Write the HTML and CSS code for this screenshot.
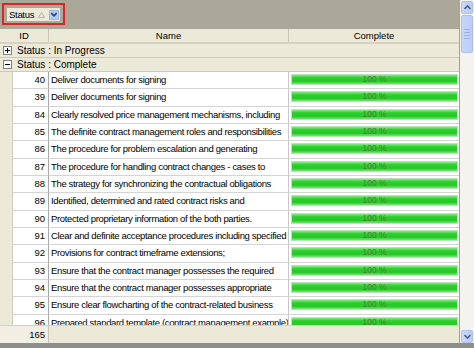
FILE: index.html
```html
<!DOCTYPE html>
<html lang="en">
<head>
  <meta charset="UTF-8" />
  <meta name="viewport" content="width=device-width, initial-scale=1.0" />
  <title>Contract Tasks</title>
  <link rel="stylesheet" href="styles.css">
</head>
<body>
  <div class="window">
    <div class="grid">
      <div class="group-panel">
        <div class="group-box">
          <div class="group-chip">
            <span class="chip-text">Status</span>
            <svg class="sort-icon" width="7" height="6" viewBox="0 0 7 6"><path d="M3.5 0.5 L6.5 5.5 L0.5 5.5 Z" fill="none" stroke="#b9b5a4" stroke-width="1"/></svg>
            <span class="chip-drop">
              <svg width="9" height="9" viewBox="0 0 9 9"><path d="M1.5 3 L4.5 6 L7.5 3" fill="none" stroke="#1c3f94" stroke-width="1.8"/></svg>
            </span>
          </div>
        </div>
      </div>

      <div class="header">
        <div class="cell-id">ID</div>
        <div class="cell-name">Name</div>
        <div class="cell-done">Complete</div>
      </div>

      <div class="group-row">
        <svg class="toggle" width="9" height="9" viewBox="0 0 9 9"><rect x="0.5" y="0.5" width="8" height="8" fill="#fff" stroke="#808080"/><path d="M2 4.5 H7 M4.5 2 V7" stroke="#000"/></svg>
        Status : In Progress
      </div>
      <div class="group-row">
        <svg class="toggle" width="9" height="9" viewBox="0 0 9 9"><rect x="0.5" y="0.5" width="8" height="8" fill="#fff" stroke="#808080"/><path d="M2 4.5 H7" stroke="#000"/></svg>
        Status : Complete
      </div>

      <div class="rows" id="rows"></div>

      <div class="footer">
        <div class="foot-id">165</div>
        <div class="foot-rest"></div>
      </div>
    </div>

    <div class="scrollbar">
      <div class="sb-btn">
        <svg width="9" height="9" viewBox="0 0 9 9"><path d="M1.5 6 L4.5 3 L7.5 6" fill="none" stroke="#4d6185" stroke-width="1.6"/></svg>
      </div>
      <div class="sb-track">
        <div class="sb-thumb"><span></span><span></span><span></span><span></span></div>
      </div>
      <div class="sb-btn">
        <svg width="9" height="9" viewBox="0 0 9 9"><path d="M1.5 3 L4.5 6 L7.5 3" fill="none" stroke="#4d6185" stroke-width="1.6"/></svg>
      </div>
    </div>
  </div>
  <div class="status-strip"></div>

  <script>
    const tasks = [
      [40, 'Deliver documents for signing'],
      [39, 'Deliver documents for signing'],
      [84, 'Clearly resolved price management mechanisms, including'],
      [85, 'The definite contract management roles and responsibilities'],
      [86, 'The procedure for problem escalation and generating'],
      [87, 'The procedure for handling contract changes - cases to'],
      [88, 'The strategy for synchronizing the contractual obligations'],
      [89, 'Identified, determined and rated contract risks and'],
      [90, 'Protected proprietary information of the both parties.'],
      [91, 'Clear and definite acceptance procedures including specified'],
      [92, 'Provisions for contract timeframe extensions;'],
      [93, 'Ensure that the contract manager possesses the required'],
      [94, 'Ensure that the contract manager possesses appropriate'],
      [95, 'Ensure clear flowcharting of the contract-related business'],
      [96, 'Prepared standard template (contract management example)']
    ];

    const rows = document.getElementById('rows');
    tasks.forEach(([id, name]) => {
      const row = document.createElement('div');
      row.className = 'row';
      row.innerHTML =
        '<div class="indent"></div>' +
        '<div class="cell-id">' + id + '</div>' +
        '<div class="cell-name">' + name + '</div>' +
        '<div class="cell-done"><div class="bar">100 %</div></div>';
      rows.appendChild(row);
    });
  </script>
</body>
</html>
```

FILE: styles.css
```css
* { box-sizing: border-box; }
body {
  margin: 0;
  width: 474px;
  height: 348px;
  overflow: hidden;
  font-family: "Liberation Sans", Arial, sans-serif;
  font-size: 9.5px;
  color: #000;
  background: #ece9d8;
}
.window {
  display: flex;
  height: 343px;
}
.grid {
  width: 460px;
  display: flex;
  flex-direction: column;
  border-right: 1px solid #a5a292;
}

/* group by panel */
.group-panel {
  height: 29px;
  background: #aca899;
  padding: 3px 0 0 2px;
}
.group-box {
  display: inline-flex;
  border: 2px solid #d8262a;
  padding: 3px 3px 2px 3px;
  height: 22px;
  width: 63px;
}
.group-chip {
  display: flex;
  align-items: center;
  gap: 4px;
  background: #ece9d8;
  padding: 0 1px 0 2px;
  width: 53px;
  font-size: 9.5px;
  letter-spacing: -0.3px;
}
.sort-icon { flex-shrink: 0; }
.chip-drop {
  display: flex;
  align-items: center;
  justify-content: center;
  flex-shrink: 0;
  width: 10px;
  height: 10px;
  background: #b8c9f0;
  border: 1px solid #9fb5e6;
}

/* header */
.header {
  display: flex;
  height: 15px;
  background: #ece9d8;
  border-bottom: 2px solid #d6d2c2;
  line-height: 13px;
}
.header .cell-id {
  width: 49px;
  text-align: center;
  border-right: 1px solid #cbc7b8;
}
.header .cell-name {
  width: 240px;
  text-align: center;
  border-right: 1px solid #cbc7b8;
}
.header .cell-done {
  flex: 1;
  text-align: center;
}

/* group rows */
.group-row {
  display: flex;
  align-items: center;
  gap: 5px;
  height: 14px;
  padding-left: 3px;
  background: #ece9d8;
  border-bottom: 1px solid #cdc9b9;
  font-size: 10px;
}
.toggle { flex-shrink: 0; }

/* data rows */
.rows {
  flex: 1;
  overflow: hidden;
  background: #ece9d8;
}
.row {
  display: flex;
  height: 17.33px;
  line-height: 16px;
}
.row > div {
  background: #fff;
  border-bottom: 1px solid #d4d4d4;
}
.row .indent {
  width: 13px;
  background: #ece9d8;
  border-bottom: none;
  border-right: 1px solid #d0ccbc;
}
.row .cell-id {
  width: 36px;
  text-align: right;
  padding-right: 3px;
  border-right: 1px solid #a8a8a8;
}
.row .cell-name {
  width: 240px;
  padding-left: 2px;
  white-space: nowrap;
  overflow: hidden;
  letter-spacing: -0.35px;
  border-right: 1px solid #c8c8c8;
}
.row .cell-done {
  flex: 1;
  padding: 2px 1px 3px 2px;
}
.bar {
  height: 11px;
  border: 1px solid #b6e4b6;
  background: linear-gradient(#86e886 0, #2ed02e 30%, #22c822 70%, #7fe27f 100%);
  color: #4f7d3a;
  font-size: 8.5px;
  line-height: 9px;
  text-align: center;
}

/* footer */
.footer {
  display: flex;
  height: 18px;
  background: #ece9d8;
  border-top: 1px solid #d6d2c2;
  line-height: 17px;
}
.foot-id {
  width: 49px;
  text-align: right;
  padding-right: 3px;
  background: #f1efe4;
  border-right: 1px solid #cbc7b8;
}
.foot-rest { flex: 1; }

/* scrollbar */
.scrollbar {
  width: 14px;
  display: flex;
  flex-direction: column;
  background: #f4f3ee;
  padding: 1px 1px 0 1px;
}
.sb-btn {
  height: 13px;
  display: flex;
  align-items: center;
  justify-content: center;
  background: linear-gradient(90deg, #c9d8fc, #b6cbf7);
  border: 1px solid #aec0ea;
  border-radius: 2px;
}
.sb-track {
  flex: 1;
  padding-top: 1px;
}
.sb-thumb {
  height: 38px;
  display: flex;
  flex-direction: column;
  align-items: center;
  justify-content: center;
  gap: 2px;
  background: linear-gradient(90deg, #c6d6fb, #b9cdf8);
  border: 1px solid #aec0ea;
  border-radius: 2px;
}
.sb-thumb span {
  width: 6px;
  height: 1px;
  background: #9db2e2;
}
.status-strip {
  height: 5px;
  background: #8f8f8a;
}
```
